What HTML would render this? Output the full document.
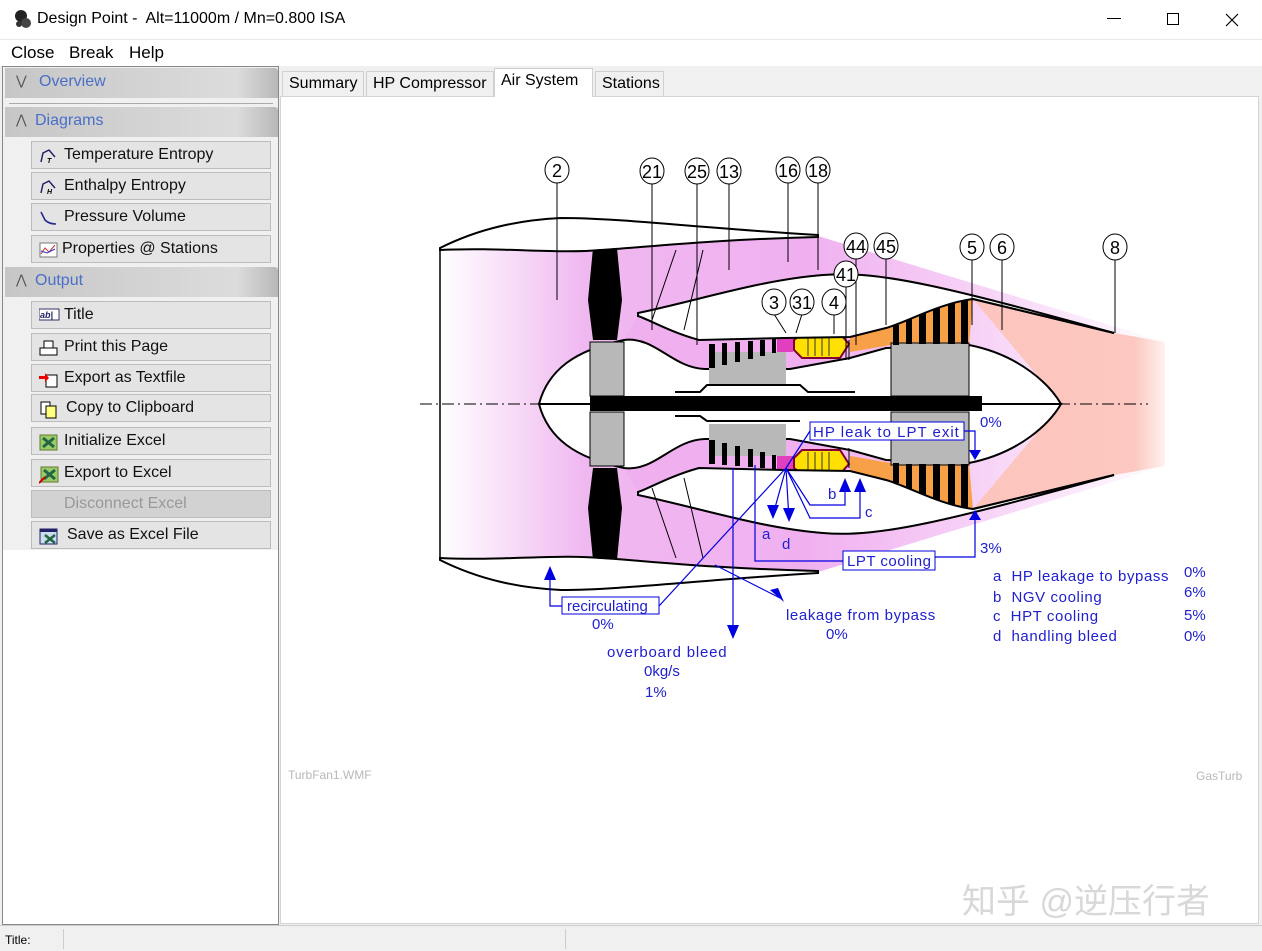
<!DOCTYPE html>
<html><head><meta charset="utf-8"><style>
*{margin:0;padding:0;box-sizing:border-box}
body{width:1262px;height:951px;position:relative;background:#f0f0f0;font-family:"Liberation Sans",Arial,sans-serif;overflow:hidden}
.abs{position:absolute}
#title{left:0;top:0;width:1262px;height:40px;background:#fff;border-bottom:1px solid #e8e8e8}
#menu{left:0;top:40px;width:1262px;height:26px;background:#fff;font-size:17px}
#menu span{position:absolute;top:3px}
#left{left:2px;top:66px;width:277px;height:859px;background:#fff;border:1px solid #888}
.hdr{position:absolute;left:2px;width:273px;height:30px;background:linear-gradient(90deg,#c6c6c6,#dcdcdc 85%,#b8b8b8);color:#4a6fc8;font-size:16px;border-radius:0 3px 0 0}
.hdr b{position:absolute;left:11px;top:5px;font-size:13px;color:#555;font-weight:normal}
.hdr span{position:absolute;top:5px}
.btn{position:absolute;left:28px;width:240px;height:28px;background:#e4e4e4;border:1px solid #bcbcbc;font-size:16px;color:#111}
.btn span{position:absolute;left:32px;top:4px}
.btn i{position:absolute;left:7px;top:6px;width:18px;height:16px}
.tab{position:absolute;top:71px;height:25px;background:#f0f0f0;border:1px solid #d0d0d0;border-bottom:none;font-size:16px;padding:3px 6px 0}
#content{left:280px;top:96px;width:979px;height:828px;background:#fff;border:1px solid #d4d4d4}
#status{left:0;top:925px;width:1262px;height:26px;background:#f0f0f0;border-top:1px solid #ccc;font-size:12px}
</style></head><body>
<div id="title" class="abs">
 <svg class="abs" style="left:13px;top:9px" width="20" height="20"><circle cx="8" cy="7" r="6" fill="#222"/><circle cx="13" cy="14" r="5" fill="#444"/><circle cx="6" cy="15" r="3" fill="#333"/></svg>
 <span class="abs" style="left:37px;top:10px;font-size:16px;color:#000">Design Point -&nbsp; Alt=11000m / Mn=0.800 ISA</span>
 <span class="abs" style="left:1107px;top:18px;width:14px;height:1px;background:#000"></span>
 <span class="abs" style="left:1167px;top:13px;width:12px;height:12px;border:1px solid #000"></span>
 <svg class="abs" style="left:1225px;top:13px" width="14" height="14"><path d="M1 1L13 13M13 1L1 13" stroke="#000" stroke-width="1.2"/></svg>
</div>
<div id="menu" class="abs"><span style="left:11px">Close</span><span style="left:69px">Break</span><span style="left:129px">Help</span></div>

<div id="left" class="abs">
 <div style="position:absolute;left:0;top:0;width:275px;height:483px;background:#f0f0f0"></div>
 <div class="hdr" style="top:1px"><b>&#8897;</b><span style="left:34px">Overview</span></div>
 <div style="position:absolute;left:6px;top:36px;width:264px;height:1px;background:#aaa"></div>
 <div class="hdr" style="top:40px"><b>&#8896;</b><span style="left:30px">Diagrams</span></div>
 <div class="btn" style="top:74px"><i><svg width="20" height="16"><path d="M2 14L4 5L10 2L16 9" stroke="#226" stroke-width="1.5" fill="none"/><text x="8" y="15" font-size="7" font-weight="bold">T</text></svg></i><span>Temperature Entropy</span></div>
 <div class="btn" style="top:105px"><i><svg width="20" height="16"><path d="M2 14L4 5L10 2L16 9" stroke="#226" stroke-width="1.5" fill="none"/><text x="8" y="15" font-size="7" font-weight="bold">H</text></svg></i><span>Enthalpy Entropy</span></div>
 <div class="btn" style="top:136px"><i><svg width="20" height="16"><path d="M2 2L6 10Q10 14 17 14" stroke="#2a2a90" stroke-width="1.6" fill="none"/></svg></i><span>Pressure Volume</span></div>
 <div class="btn" style="top:168px"><i><svg width="20" height="16"><rect x="1" y="1" width="17" height="14" fill="#fff" stroke="#777"/><path d="M2 12L6 6L10 10L16 3" stroke="#c33" fill="none"/><path d="M2 9L8 11L16 7" stroke="#33c" fill="none"/></svg></i><span style="left:30px">Properties @ Stations</span></div>
 <div class="hdr" style="top:200px"><b>&#8896;</b><span style="left:30px">Output</span></div>
 <div class="btn" style="top:234px"><i><svg width="22" height="14"><rect x="0" y="1" width="20" height="11" fill="#fff" stroke="#336"/><text x="1" y="10" font-size="9" font-weight="bold" fill="#226">ab|</text></svg></i><span>Title</span></div>
 <div class="btn" style="top:266px"><i><svg width="20" height="18"><rect x="5" y="1" width="9" height="8" fill="#fff" stroke="#000"/><rect x="1" y="8" width="17" height="7" fill="#fff" stroke="#000"/></svg></i><span>Print this Page</span></div>
 <div class="btn" style="top:297px"><i><svg width="20" height="18"><rect x="7" y="4" width="11" height="12" fill="#fff" stroke="#000"/><path d="M0 5L6 5L6 2L10 7L6 11L6 8L0 8Z" fill="#e00"/></svg></i><span>Export as Textfile</span></div>
 <div class="btn" style="top:327px"><i><svg width="20" height="18"><rect x="2" y="1" width="9" height="12" fill="#fff" stroke="#000"/><rect x="7" y="5" width="10" height="12" fill="#ffff80" stroke="#000"/></svg></i><span style="left:34px">Copy to Clipboard</span></div>
 <div class="btn" style="top:360px"><i><svg width="20" height="18"><rect x="1" y="1" width="17" height="15" fill="#9c6" stroke="#673"/><path d="M4 4L15 13M15 4L4 13" stroke="#264" stroke-width="3"/></svg></i><span>Initialize Excel</span></div>
 <div class="btn" style="top:392px"><i><svg width="20" height="18"><rect x="2" y="1" width="17" height="15" fill="#9c6" stroke="#673"/><path d="M5 4L16 13M16 4L5 13" stroke="#264" stroke-width="3"/><path d="M0 17L6 11" stroke="#c00" stroke-width="2"/></svg></i><span>Export to Excel</span></div>
 <div class="btn" style="top:423px;background:#d2d2d2;color:#999"><span style="left:32px">Disconnect Excel</span></div>
 <div class="btn" style="top:454px"><i><svg width="20" height="18"><rect x="1" y="1" width="17" height="15" fill="#cde" stroke="#226"/><rect x="1" y="1" width="17" height="3" fill="#226"/><path d="M6 7L16 15M16 7L6 15" stroke="#264" stroke-width="2.5"/></svg></i><span style="left:35px">Save as Excel File</span></div>
</div>

<div class="tab" style="left:282px;width:82px">Summary</div>
<div class="tab" style="left:366px;width:128px">HP Compressor</div>
<div class="tab" style="left:494px;top:68px;height:29px;width:99px;background:#fff;z-index:2">Air System</div>
<div class="tab" style="left:595px;width:69px">Stations</div>

<div id="content" class="abs"></div>
<svg class="abs" style="left:0;top:0" width="1262" height="951" font-family="Liberation Sans Narrow,Liberation Sans,sans-serif">
<defs>
 <linearGradient id="bp" gradientUnits="userSpaceOnUse" x1="440" y1="0" x2="1170" y2="0">
  <stop offset="0" stop-color="#fff"/><stop offset="0.2" stop-color="#f0b8f0"/><stop offset="0.5" stop-color="#f0b0f0"/><stop offset="0.75" stop-color="#f7d4f7"/><stop offset="1" stop-color="#fff"/></linearGradient>
 <linearGradient id="ex" gradientUnits="userSpaceOnUse" x1="970" y1="0" x2="1175" y2="0">
  <stop offset="0" stop-color="#fcc4bc"/><stop offset="0.8" stop-color="#fcc8c0"/><stop offset="1" stop-color="#fff"/></linearGradient>
 <g id="half">
  <path d="M440,250 C500,247 560,254 600,250 C640,248 700,240 818,236 L1165,342 L1165,404 L440,404 Z" fill="url(#bp)"/>
  <path d="M973,299 L1114,333 L1165,342 L1165,404 L1061,404 Z" fill="url(#ex)"/>
  <path d="M638,316 C660,325 680,338 699,340 L790,338 L790,369 L705,369 C672,368 655,338 624,340 Z" fill="#f0b0f0"/>
  <path d="M850,337 L886,328 C920,318 945,303 973,299 L969,345 L891,345 L850,352 Z" fill="#f8a048"/>
  <path d="M539,404 C548,370 575,350 624,340 C655,336 672,368 705,369 L790,369 L850,358 L886,348 L969,345 C1020,355 1050,385 1061,404 Z" fill="#fff" stroke="#000" stroke-width="2"/>
  <rect x="590" y="342" width="34" height="54" fill="#b8b8b8" stroke="#000"/>
  <rect x="709" y="352" width="77" height="32" fill="#b8b8b8"/>
  <rect x="891" y="343" width="78" height="53" fill="#b8b8b8" stroke="#000"/>
  <path d="M593,248 L617,248 L622,300 L617,340 L593,340 L588,300 Z" fill="#000"/>
  <g fill="#000"><rect x="709" y="344" width="6" height="24"/><rect x="722" y="343" width="5" height="22"/><rect x="735" y="342" width="5" height="20"/><rect x="748" y="341" width="5" height="18"/><rect x="760" y="340" width="5" height="16"/><rect x="772" y="339" width="4" height="14"/></g>
  <rect x="777" y="338" width="16" height="14" fill="#e040c0"/>
  <path d="M794,340 L802,334 L840,334 L849,344 L840,358 L802,358 L794,350 Z" fill="#ffe000" stroke="#800030" stroke-width="2"/>
  <g stroke="#333"><path d="M808,338V356M815,338V356M822,338V356M829,338V356"/></g>
  <g fill="#000"><rect x="893" y="325" width="6" height="20"/><rect x="906" y="318" width="6" height="26"/><rect x="919" y="313" width="7" height="31"/><rect x="933" y="308" width="7" height="36"/><rect x="948" y="303" width="7" height="41"/><rect x="961" y="300" width="7" height="44"/></g>
  <path d="M638,313 C700,300 760,280 823,275 C880,270 950,288 1114,333 L973,299 C940,303 905,323 886,328 L850,337 L784,338 L699,340 C670,332 650,320 638,316 Z" fill="#fff" stroke="#000" stroke-width="2"/>
  <path d="M440,248 C480,228 520,220 561,218 C620,218 700,228 818,235 L818,237 C700,240 640,248 600,250 C560,254 500,247 440,250 Z" fill="#fff" stroke="#000" stroke-width="2"/>
  <path d="M973,299 L1114,333" stroke="#000" stroke-width="2"/>
  <g stroke="#000" stroke-width="1"><path d="M652,320L676,250M684,330L703,250M849,340V360"/></g>
 </g>
</defs>
<use href="#half"/>
<use href="#half" transform="translate(0,808) scale(1,-1)"/>
<path d="M440,248V560" stroke="#000" stroke-width="1.5"/>
<rect x="590" y="396" width="392" height="15" fill="#000"/>
<path d="M675,392H700L707,385H800L808,392H855M675,416H700L707,421H800" stroke="#000" stroke-width="2" fill="none"/>
<path d="M420,404H1148" stroke="#000" stroke-dasharray="12,4,2,4"/>
<g stroke="#000" stroke-width="1" fill="#fff">
 <path d="M557,182V300M652,182V330M697,182V345M729,182V270M788,182V262M818,182V270M856,258V345M886,258V325M972,258V325M1002,258V330M1115,258V333M846,286V360M774,314L786,333M802,314L796,333M834,314V334" fill="none"/>
 <ellipse cx="557" cy="170" rx="12" ry="13"/><ellipse cx="652" cy="171" rx="12" ry="13"/><ellipse cx="697" cy="171" rx="12" ry="13"/><ellipse cx="729" cy="171" rx="12" ry="13"/><ellipse cx="788" cy="170" rx="12" ry="13"/><ellipse cx="818" cy="170" rx="12" ry="13"/>
 <ellipse cx="856" cy="246" rx="12" ry="13"/><ellipse cx="886" cy="246" rx="12" ry="13"/><ellipse cx="972" cy="247" rx="12" ry="13"/><ellipse cx="1002" cy="247" rx="12" ry="13"/><ellipse cx="1115" cy="247" rx="12" ry="13"/>
 <ellipse cx="846" cy="274" rx="12" ry="13"/><ellipse cx="774" cy="302" rx="12" ry="13"/><ellipse cx="802" cy="302" rx="12" ry="13"/><ellipse cx="834" cy="302" rx="12" ry="13"/>
</g>
<g font-size="18" text-anchor="middle" fill="#000">
 <text x="557" y="177">2</text><text x="652" y="178">21</text><text x="697" y="178">25</text><text x="729" y="178">13</text><text x="788" y="177">16</text><text x="818" y="177">18</text>
 <text x="856" y="253">44</text><text x="886" y="253">45</text><text x="972" y="254">5</text><text x="1002" y="254">6</text><text x="1115" y="254">8</text>
 <text x="846" y="281">41</text><text x="774" y="309">3</text><text x="802" y="309">31</text><text x="834" y="309">4</text>
</g>
<g stroke="#0000e0" stroke-width="1.2" fill="none">
 <path d="M786,468L810,431M964,431H975V455M975,514V557H935M843,561H755V465M733,468V630M550,572V606H562M659,606L786,468M786,468L773,515M786,468L789,520M786,468L810,505H845V480M786,468L810,518H860V485M715,565L780,598"/>
</g>
<g fill="#0000e0">
 <path d="M969,450h12l-6,10z"/><path d="M969,520h12l-6,-10z"/><path d="M727,625h12l-6,14z"/><path d="M544,580h12l-6,-14z"/><path d="M767,505h12l-6,14z"/><path d="M783,508h12l-6,14z"/><path d="M839,492h12l-6,-14z"/><path d="M854,492h12l-6,-14z"/><path d="M770,590l14,12l-6,-14z"/>
</g>
<g fill="#fff" stroke="#0000e0"><rect x="810" y="422" width="154" height="18"/><rect x="843" y="551" width="92" height="19"/><rect x="562" y="597" width="97" height="17"/></g>
<g fill="#2020d0" font-size="15">
 <text x="813" y="437" letter-spacing="1">HP leak to LPT exit</text><text x="980" y="427">0%</text><text x="980" y="553">3%</text>
 <text x="847" y="566" letter-spacing="0.5">LPT cooling</text><text x="567" y="611">recirculating</text><text x="592" y="629">0%</text>
 <text x="607" y="657" letter-spacing="0.8">overboard bleed</text><text x="644" y="676">0kg/s</text><text x="645" y="697">1%</text>
 <text x="786" y="620" letter-spacing="0.6">leakage from bypass</text><text x="826" y="639">0%</text>
 <text x="762" y="539">a</text><text x="782" y="549">d</text><text x="828" y="499">b</text><text x="865" y="517">c</text>
 <text x="993" y="581" letter-spacing="0.6">a&#160; HP leakage to bypass</text><text x="993" y="602" letter-spacing="0.6">b&#160; NGV cooling</text><text x="993" y="621" letter-spacing="0.6">c&#160; HPT cooling</text><text x="993" y="641" letter-spacing="0.6">d&#160; handling bleed</text>
 <text x="1184" y="577">0%</text><text x="1184" y="597">6%</text><text x="1184" y="620">5%</text><text x="1184" y="641">0%</text>
</g>
<text x="288" y="779" font-size="12" fill="#b8b8b8">TurbFan1.WMF</text>
<text x="1196" y="780" font-size="12" fill="#b8b8b8">GasTurb</text>
<text x="962" y="913" font-size="34" fill="#d8d8d8" font-family="Liberation Sans,Noto Sans CJK SC,sans-serif">知乎 @逆压行者</text>
</svg>
<div id="status" class="abs"><span class="abs" style="left:5px;top:7px">Title:</span><span class="abs" style="left:63px;top:3px;width:1px;height:20px;background:#ccc"></span><span class="abs" style="left:565px;top:3px;width:1px;height:20px;background:#ccc"></span></div>
</body></html>
